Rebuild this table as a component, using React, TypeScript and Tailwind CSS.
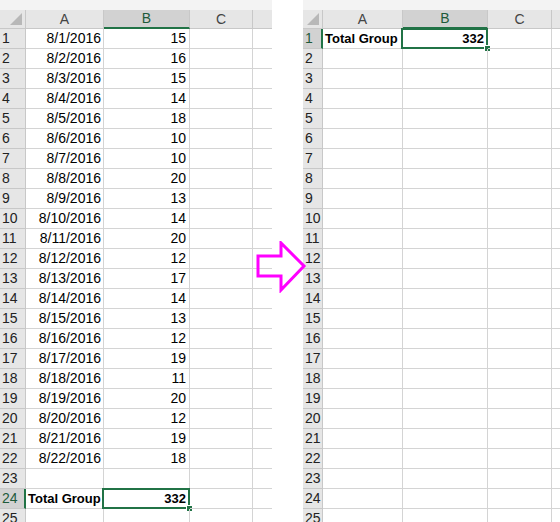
const dates = [
  ["8/1/2016", "15"],
  ["8/2/2016", "16"],
  ["8/3/2016", "15"],
  ["8/4/2016", "14"],
  ["8/5/2016", "18"],
  ["8/6/2016", "10"],
  ["8/7/2016", "10"],
  ["8/8/2016", "20"],
  ["8/9/2016", "13"],
  ["8/10/2016", "14"],
  ["8/11/2016", "20"],
  ["8/12/2016", "12"],
  ["8/13/2016", "17"],
  ["8/14/2016", "14"],
  ["8/15/2016", "13"],
  ["8/16/2016", "12"],
  ["8/17/2016", "19"],
  ["8/18/2016", "11"],
  ["8/19/2016", "20"],
  ["8/20/2016", "12"],
  ["8/21/2016", "19"],
  ["8/22/2016", "18"],
];

type Row = { a?: string; b?: string; bold?: boolean };

type SheetProps = {
  width: number;
  hdr: number;
  cols: number[];
  rows: Row[];
  selRow: number; // 1-based
};

function Sheet({ width, hdr, cols, rows, selRow }: SheetProps) {
  const letters = ["A", "B", "C", ""];
  return (
    <div className="flex flex-col overflow-hidden bg-white" style={{ width }}>
      <div className="h-[10px] shrink-0 bg-[#f3f3f3]" />
      {/* Column header */}
      <div className="flex h-[19px] shrink-0 bg-[#e6e6e6]">
        <div
          className="relative shrink-0 border-r border-b border-[#c8c8c8]"
          style={{ width: hdr }}
        >
          <svg className="absolute right-[3px] bottom-[3px]" width="12" height="12" viewBox="0 0 12 12">
            <polygon points="12,0 12,12 0,12" fill="#b8b8b8" />
          </svg>
        </div>
        {cols.map((w, i) => (
          <div
            key={i}
            className={
              i === 1
                ? "shrink-0 flex items-center justify-center border-r border-[#c8c8c8] border-b-2 border-b-[#217346] bg-[#d2d2d2] text-[#1e5a3a]"
                : "shrink-0 flex items-center justify-center border-r border-b border-[#c8c8c8] text-[#444]"
            }
            style={{ width: w }}
          >
            {letters[i]}
          </div>
        ))}
      </div>
      {rows.map((r, idx) => {
        const n = idx + 1;
        const sel = n === selRow;
        return (
          <div key={n} className="flex h-[20px] shrink-0">
            <div
              className={
                sel
                  ? "shrink-0 flex items-center pl-[2px] border-b border-[#c8c8c8] border-r-2 border-r-[#217346] bg-[#d2d2d2] text-[#1e5a3a]"
                  : "shrink-0 flex items-center pl-[2px] border-r border-b border-[#c8c8c8] bg-[#e6e6e6] text-[#222]"
              }
              style={{ width: hdr }}
            >
              {n}
            </div>
            {cols.map((w, i) => {
              const text = i === 0 ? r.a : i === 1 ? r.b : undefined;
              const isSel = sel && i === 1;
              return (
                <div
                  key={i}
                  className={
                    "relative shrink-0 flex items-center border-r border-b border-[#d4d4d4] text-black whitespace-nowrap " +
                    (r.bold ? "font-bold text-[13px] pl-[2px] " : "") +
                    (i === 0 && !r.bold ? "justify-end pr-[2px]" : i === 1 ? "justify-end pr-[3px]" : "")
                  }
                  style={{ width: w }}
                >
                  {text}
                  {isSel && (
                    <>
                      <div className="absolute -left-[2px] -top-[1px] right-[-1px] bottom-[-1px] border-2 border-[#217346]" />
                      <div className="absolute right-[-4px] bottom-[-4px] h-[7px] w-[7px] bg-[#217346] border border-white" />
                    </>
                  )}
                </div>
              );
            })}
          </div>
        );
      })}
    </div>
  );
}

export default function App() {
  const left: Row[] = [
    ...dates.map(([a, b]) => ({ a, b })),
    {},
    { a: "Total Group", b: "332", bold: true },
    {},
  ];
  const right: Row[] = [
    { a: "Total Group", b: "332", bold: true },
    ...Array.from({ length: 24 }, () => ({})),
  ];

  return (
    <div
      className="relative flex h-[522px] w-[560px] overflow-hidden bg-white text-[14px]"
      style={{ fontFamily: '"Liberation Sans", Arial, sans-serif' }}
    >
      <Sheet width={272} hdr={26} cols={[78, 86, 63, 40]} rows={left} selRow={24} />
      <div className="w-[31px] shrink-0" />
      <Sheet width={257} hdr={20} cols={[80, 85, 64, 40]} rows={right} selRow={1} />

      {/* Arrow */}
      <svg
        className="absolute left-[255px] top-[241px]"
        width="54"
        height="52"
        viewBox="0 0 54 52"
      >
        <polygon
          points="3,15 26,15 26,2 49,25 26,49 26,35 3,35"
          fill="none"
          stroke="#ff00ff"
          strokeWidth="3"
          strokeLinejoin="miter"
        />
      </svg>
    </div>
  );
}
